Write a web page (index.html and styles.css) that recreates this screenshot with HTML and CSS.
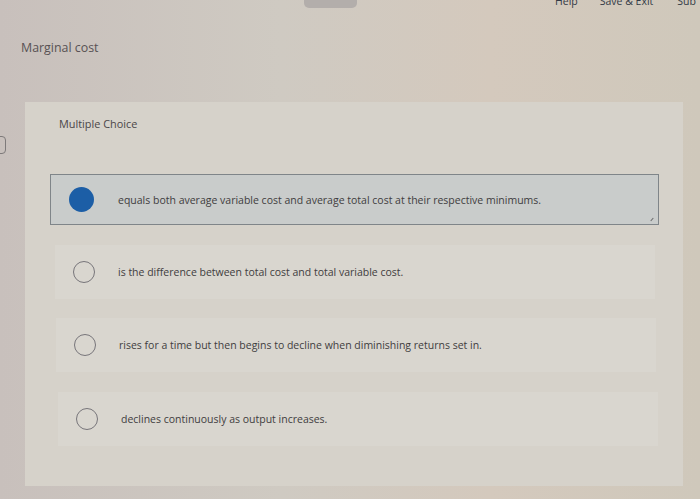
FILE: index.html
```html
<!DOCTYPE html>
<html>
<head>
<meta charset="utf-8">
<link rel="stylesheet" href="styles.css">
</head>
<body>
<div class="screen">
  <header class="topbar">
    <div class="tab"></div>
    <nav class="links">
      <span class="link">Help</span>
      <span class="link">Save &amp; Exit</span>
      <span class="link">Sub</span>
    </nav>
  </header>
  <div class="edge-btn"></div>
  <h1 class="title">Marginal cost</h1>
  <section class="panel">
    <div class="kind">Multiple Choice</div>
    <div class="options">
      <div class="option selected">
        <span class="radio filled"></span>
        <span class="text">equals both average variable cost and average total cost at their respective minimums.</span>
        <span class="grip"></span>
      </div>
      <div class="option o2">
        <span class="radio"></span>
        <span class="text">is the difference between total cost and total variable cost.</span>
      </div>
      <div class="option o3">
        <span class="radio"></span>
        <span class="text">rises for a time but then begins to decline when diminishing returns set in.</span>
      </div>
      <div class="option o4">
        <span class="radio"></span>
        <span class="text">declines continuously as output increases.</span>
      </div>
    </div>
  </section>
</div>
</body>
</html>
```
FILE: styles.css
```css
html, body {
  margin: 0;
  padding: 0;
}
body {
  width: 700px;
  height: 499px;
  overflow: hidden;
  background: #cbc5bd;
  font-family: "Open Sans", "Liberation Sans", Arial, sans-serif;
  color: #4e4a4c;
}
.screen {
  position: relative;
  width: 700px;
  height: 499px;
  background: linear-gradient(90deg, #c8c0bc 0%, #cfcac2 40%, #d4c9bd 70%, #cfc8bb 100%);
}
.topbar {
  height: 18px;
  position: relative;
}
.tab {
  position: absolute;
  left: 304px;
  top: -4px;
  width: 53px;
  height: 12px;
  border-radius: 5px;
  background: #b3aeab;
}
.links {
  position: absolute;
  top: -5px;
  left: 555px;
  display: flex;
  gap: 22px;
  font-size: 10.5px;
  line-height: 12px;
  color: #333a46;
}
.links .link:nth-child(3) { margin-left: 2px; }
.edge-btn {
  position: absolute;
  left: -10px;
  top: 136px;
  width: 14px;
  height: 16px;
  border: 1px solid #7e7a7a;
  border-radius: 4px;
}
.title {
  margin: 23px 0 0 21px;
  font-size: 12.4px;
  font-weight: normal;
  color: #585254;
  line-height: 14px;
}
.panel {
  margin: 47px 0 0 25px;
  width: 658px;
  height: 384px;
  background: #d6d2ca;
  box-sizing: border-box;
  padding: 16px 0 0 0;
}
.kind {
  margin-left: 34px;
  font-size: 10.9px;
  line-height: 12px;
  color: #4a4648;
}
.options {
  margin-top: 44px;
  display: flex;
  flex-direction: column;
  gap: 19.5px;
}
.option {
  position: relative;
  display: flex;
  align-items: center;
  height: 54px;
  margin-left: 30px;
  width: 600px;
  background: #d9d6cf;
}
.option .text {
  font-size: 10.5px;
  color: #3f3d40;
}
.option.selected {
  margin-left: 25px;
  width: 609px;
  height: 51px;
  background: #c9cccb;
  border: 1px solid #7f8589;
  box-sizing: border-box;
}
.option.o3 { margin-left: 31px; }
.option.o4 { margin-left: 33px; }
.radio {
  flex: none;
  width: 22px;
  height: 22px;
  border: 1.5px solid #77757a;
  border-radius: 50%;
  box-sizing: border-box;
  margin: 0 23px 0 18px;
}
.radio.filled {
  width: 25px;
  height: 25px;
  border: none;
  background: #1c5ea6;
  margin: 0 24px 0 18px;
}
.grip {
  position: absolute;
  right: 4px;
  bottom: 4px;
  width: 4px;
  height: 1px;
  background: #666;
  transform: rotate(-50deg);
}
```
